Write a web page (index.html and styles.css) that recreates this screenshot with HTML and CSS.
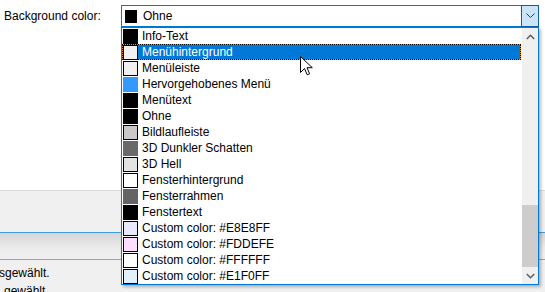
FILE: index.html
```html
<!DOCTYPE html>
<html lang="de">
<head>
  <meta charset="UTF-8">
  <title>Background color</title>
  <link rel="stylesheet" href="styles.css">
</head>
<body>
  <div class="screen">

    <!-- Settings panel -->
    <div class="panel">
      <div class="field">
        <span class="field-label">Background color:</span>
        <div class="combo">
          <span class="combo-swatch"></span>
          <span class="combo-text">Ohne</span>
          <span class="combo-btn">
            <svg width="9" height="6" viewBox="0 0 9 6"><polyline points="0.5,0.5 4.5,4.5 8.5,0.5" fill="none" stroke="#3c3c3c" stroke-width="1"/></svg>
          </span>
        </div>
      </div>
    </div>

    <div class="toolbar"></div>
    <div class="tabstrip"></div>

    <div class="status">
      <p class="status-line">sgewählt.</p>
      <p class="status-line status-second">gewählt</p>
    </div>

    <!-- Open dropdown list -->
    <div class="dropdown">
      <ul class="options">
        <li class="option"><span class="swatch swatch-black"></span>Info-Text</li>
        <li class="option option-active"><span class="swatch swatch-menu"></span>Menühintergrund</li>
        <li class="option"><span class="swatch swatch-menu"></span>Menüleiste</li>
        <li class="option"><span class="swatch swatch-hilite"></span>Hervorgehobenes Menü</li>
        <li class="option"><span class="swatch swatch-black"></span>Menütext</li>
        <li class="option"><span class="swatch swatch-black"></span>Ohne</li>
        <li class="option"><span class="swatch swatch-scroll"></span>Bildlaufleiste</li>
        <li class="option"><span class="swatch swatch-dark"></span>3D Dunkler Schatten</li>
        <li class="option"><span class="swatch swatch-light"></span>3D Hell</li>
        <li class="option"><span class="swatch swatch-white"></span>Fensterhintergrund</li>
        <li class="option"><span class="swatch swatch-frame"></span>Fensterrahmen</li>
        <li class="option"><span class="swatch swatch-black"></span>Fenstertext</li>
        <li class="option"><span class="swatch" style="background:#E8E8FF"></span>Custom color: #E8E8FF</li>
        <li class="option"><span class="swatch" style="background:#FDDEFE"></span>Custom color: #FDDEFE</li>
        <li class="option"><span class="swatch" style="background:#FFFFFF"></span>Custom color: #FFFFFF</li>
        <li class="option"><span class="swatch" style="background:#E1F0FF"></span>Custom color: #E1F0FF</li>
      </ul>
      <div class="scrollbar">
        <span class="scroll-btn">
          <svg width="9" height="6" viewBox="0 0 9 6"><polyline points="0.8,5 4.5,1.3 8.2,5" fill="none" stroke="#606060" stroke-width="1.6"/></svg>
        </span>
        <div class="scroll-track"><div class="scroll-thumb"></div></div>
        <span class="scroll-btn">
          <svg width="9" height="6" viewBox="0 0 9 6"><polyline points="0.8,1 4.5,4.7 8.2,1" fill="none" stroke="#606060" stroke-width="1.6"/></svg>
        </span>
      </div>
    </div>

    <!-- Mouse pointer -->
    <svg class="cursor" width="13" height="20" viewBox="0 0 13 20">
      <path d="M0.5,0.5 L0.5,16.5 L4.5,12.5 L7.2,18.8 L9.6,17.8 L7,11.7 L12.3,11.7 Z" fill="#fff" stroke="#000" stroke-width="1"/>
    </svg>

  </div>
</body>
</html>
```

FILE: styles.css
```css
html, body {
  margin: 0;
  padding: 0;
}
body {
  font-family: "Liberation Sans", Arial, sans-serif;
  font-size: 12px;
  color: #000;
  background-color: #f0f0f0;
}
.screen {
  position: relative;
  width: 545px;
  height: 292px;
  overflow: hidden;
  background-color: #f0f0f0;
}

/* Panel with the colour field */
.panel {
  height: 190px;
  background-color: #fff;
  border-bottom: 1px solid #dadada;
}
.field {
  display: flex;
  align-items: center;
  padding: 5px 6px 0 4px;
}
.field-label {
  width: 117px;
}
.combo {
  flex: 1;
  display: flex;
  align-items: center;
  height: 22px;
  box-sizing: border-box;
  border: 1px solid #0078d7;
  background-color: #fff;
  padding-left: 3px;
}
.combo-swatch {
  width: 12px;
  height: 13px;
  background-color: #000;
}
.combo-text {
  margin-left: 6px;
}
.combo-btn {
  margin: -1px -1px -1px auto;
  align-self: stretch;
  width: 16px;
  border: 1px solid #0f5ea8;
  background-color: #cce4f7;
  display: flex;
  align-items: center;
  justify-content: center;
}

.toolbar {
  height: 41px;
  background-color: #f0f0f0;
}
.tabstrip {
  height: 26px;
  border-top: 1px solid #3f9de0;
  border-bottom: 1px solid #a0a0a0;
  background: linear-gradient(to bottom, #d6d6d6, #ececec 60%, #f0f0f0);
}
.status {
  padding-top: 4px;
}
.status-line {
  margin: 0;
  line-height: 18px;
  white-space: nowrap;
  margin-left: -1px;
}
.status-second {
  padding-left: 5px;
}

/* Dropdown list */
.dropdown {
  position: absolute;
  left: 121px;
  top: 27px;
  width: 418px;
  height: 258px;
  box-sizing: border-box;
  border: 1px solid #0078d7;
  background-color: #fff;
  display: flex;
  box-shadow: 2px 2px 3px rgba(0, 0, 0, 0.28);
}
.options {
  list-style: none;
  margin: 0;
  padding: 0;
  flex: 1;
}
.option {
  height: 16px;
  display: flex;
  align-items: center;
  white-space: nowrap;
  margin-right: 1px;
}
.option-active {
  background-color: #0078d7;
  color: #fff;
  box-shadow: inset 0 0 0 1px #f08a24;
  outline: 1px dotted #000;
  outline-offset: -1px;
}
.swatch {
  width: 13px;
  height: 13px;
  margin: 0 4px 0 1px;
  border: 1px solid #000;
  flex-shrink: 0;
}
.swatch-black { background-color: #000; }
.swatch-menu { background-color: #f0f0f0; }
.swatch-hilite { background-color: #3399ff; border-color: #3399ff; }
.swatch-scroll { background-color: #c8c8c8; }
.swatch-dark { background-color: #696969; border-color: #696969; }
.swatch-light { background-color: #e3e3e3; }
.swatch-white { background-color: #fff; }
.swatch-frame { background-color: #646464; border-color: #646464; }

/* Scrollbar */
.scrollbar {
  width: 16px;
  display: flex;
  flex-direction: column;
  background-color: #f0f0f0;
}
.scroll-btn {
  height: 17px;
  display: flex;
  align-items: center;
  justify-content: center;
}
.scroll-track {
  flex: 1;
  display: flex;
  flex-direction: column;
  justify-content: flex-end;
}
.scroll-thumb {
  height: 62px;
  background-color: #cdcdcd;
}

.cursor {
  position: absolute;
  left: 300px;
  top: 56px;
}
```
